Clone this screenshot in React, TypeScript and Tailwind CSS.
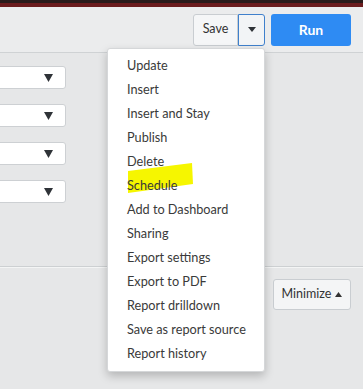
import React from 'react';

const menuItems = [
  'Update',
  'Insert',
  'Insert and Stay',
  'Publish',
  'Delete',
  'Schedule',
  'Add to Dashboard',
  'Sharing',
  'Export settings',
  'Export to PDF',
  'Report drilldown',
  'Save as report source',
  'Report history',
];

const SelectBox: React.FC = () => (
  <div className="h-[23px] w-[80px] -ml-[14px] bg-white border border-[#cdd0d3] rounded-[3px] flex items-center justify-end pr-[12px]">
    <svg width="9" height="8" viewBox="0 0 9 8">
      <polygon points="0,0 9,0 4.5,8" fill="#2f3338" />
    </svg>
  </div>
);

export default function App() {
  return (
    <div
      className="relative w-[363px] h-[389px] overflow-hidden bg-[#e6e7e8] text-[#333]"
      style={{ fontFamily: 'Lato, "Open Sans", sans-serif' }}
    >
      <div className="h-[3px] bg-[#2a1b1b]" />
      <div className="h-[4px] bg-[#6b1c1e]" />

      {/* toolbar */}
      <div className="h-[46px] flex items-center justify-end pr-[12px] border-b border-[#cfd2d4] bg-[#ebeced]">
        <div className="flex h-[32px]">
          <button className="w-[45px] h-full bg-[#f5f6f7] border border-[#c9cdd1] rounded-l-[3px] text-[12.5px] text-[#333]">
            Save
          </button>
          <button className="w-[27px] h-full bg-[#f2f4f6] border border-[#3f80cc] rounded-r-[3px] flex items-center justify-center">
            <svg width="8" height="5" viewBox="0 0 8 5">
              <polygon points="0,0 8,0 4,5" fill="#2f3338" />
            </svg>
          </button>
        </div>
        <button className="ml-[6px] w-[80px] h-[32px] bg-[#2e8bf3] rounded-[3px] text-white text-[14px] font-bold">
          Run
        </button>
      </div>

      {/* filter area */}
      <div className="h-[214px] border-b border-[#cdd0d2] flex flex-col gap-[15px] pt-[13px]">
        <SelectBox />
        <SelectBox />
        <SelectBox />
        <SelectBox />
      </div>

      {/* lower area */}
      <div className="flex justify-end pr-[12px] pt-[11px] border-t border-[#f4f5f5]">
        <button className="w-[78px] h-[31px] bg-[#f4f5f6] border border-[#c9cdd1] rounded-[3px] text-[12.5px] text-[#333] flex items-center justify-center gap-[4px]">
          Minimize
          <svg width="7" height="5" viewBox="0 0 7 5">
            <polygon points="0,5 7,5 3.5,0" fill="#333" />
          </svg>
        </button>
      </div>

      {/* dropdown menu */}
      <div className="absolute left-[107px] top-[48px] w-[158px] bg-white border border-[#d5d7d9] rounded-[3px] shadow-[0_4px_10px_rgba(0,0,0,0.22)] py-[5px]">
        <svg className="absolute left-[19px] top-[113px]" width="70" height="33" viewBox="0 0 70 33">
          <polygon points="1,9 65,1 66,22 1,31" fill="#f6f600" />
        </svg>
        {menuItems.map((item) => (
          <div key={item} className="relative h-[24px] flex items-center pl-[19px] text-[12.7px] text-[#3a3a3a]">
            {item}
          </div>
        ))}
      </div>
    </div>
  );
}
